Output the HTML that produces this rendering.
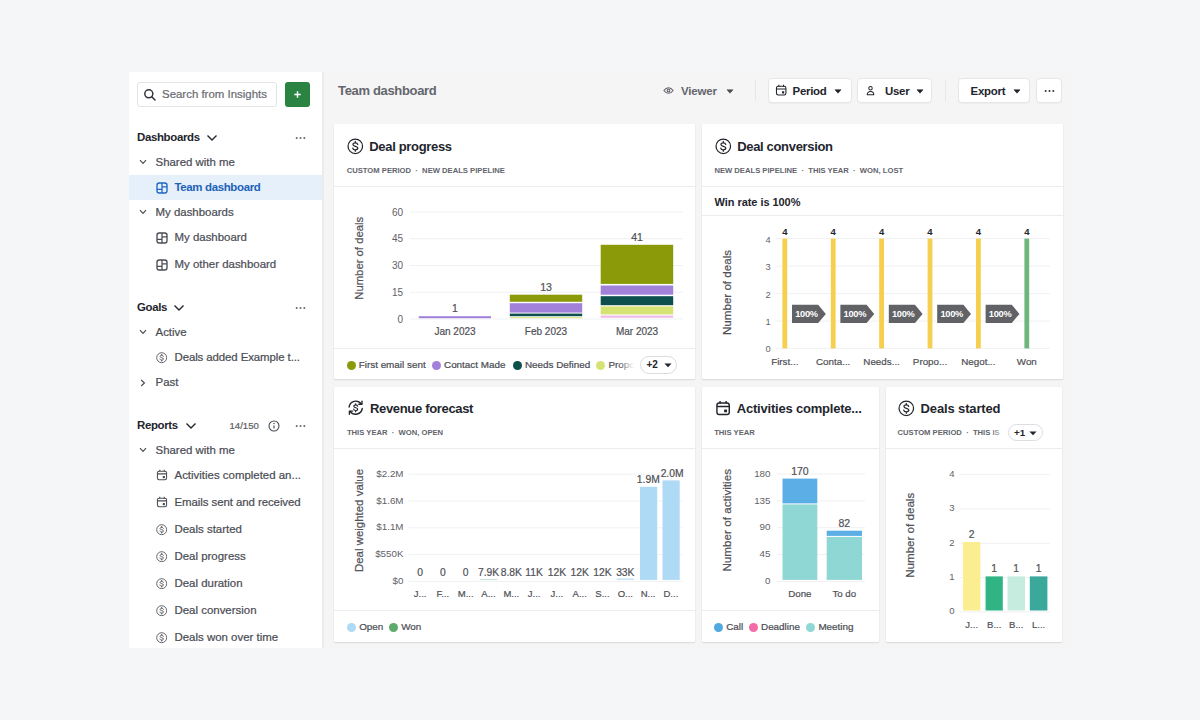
<!DOCTYPE html>
<html>
<head>
<meta charset="utf-8">
<title>Team dashboard</title>
<style>
*{box-sizing:border-box;margin:0;padding:0}
html,body{width:1200px;height:720px;overflow:hidden}
body{background:#f5f6f8;font-family:"Liberation Sans",sans-serif;color:#3f4148;position:relative}
.abs{position:absolute}
.t{position:absolute;white-space:nowrap;line-height:1;transform:translateY(-50%);font-size:11.45px;color:#4b4d54}
.b{font-weight:700;color:#23252d;letter-spacing:-.34px}
.side{position:absolute;left:129px;top:72px;width:193px;height:576px;background:#fff}
.main{position:absolute;left:323.5px;top:72px;width:747.5px;height:576px;background:#f5f5f5}
.card{position:absolute;background:#fff;border-radius:1px;box-shadow:0 1px 1.5px rgba(40,40,45,.13),0 0 1px rgba(40,40,45,.08)}
.hr{position:absolute;height:1px;background:#ececef}
.btn{position:absolute;top:78px;height:25px;background:#fff;border:1px solid #e6e6e8;border-radius:4px;box-shadow:0 1px 1px rgba(40,40,45,.04)}
.ct{position:absolute;white-space:nowrap;line-height:1;transform:translateY(-50%);font-size:13px;font-weight:700;color:#23252d;letter-spacing:-.33px}
.sub{position:absolute;white-space:pre;line-height:1;transform:translateY(calc(-50% + .9px));font-size:7.65px;font-weight:700;color:#62646b}
.lg{position:absolute;white-space:nowrap;line-height:1;transform:translateY(-50%);font-size:9.9px;color:#4b4d54}
.dot{position:absolute;width:9px;height:9px;border-radius:50%}
.pill{position:absolute;background:#fff;border:1px solid #dcdde2;border-radius:10px}
svg{position:absolute;overflow:visible}
svg text{font-family:"Liberation Sans",sans-serif}
.t,.lg{-webkit-text-stroke:.22px currentColor}
.t.b{-webkit-text-stroke:0}
svg text:not([font-weight="700"]){stroke:currentColor;stroke-width:.2px}
</style>
</head>
<body>

<svg width="0" height="0" style="position:absolute"><defs>
<symbol id="dl" viewBox="0 0 16 16"><circle cx="8" cy="8" r="7" fill="none" stroke="currentColor" stroke-width="1.2"/><path d="M10.35 6.25c-.25-1-1.1-1.6-2.35-1.6-1.35 0-2.25.7-2.25 1.7 0 2.35 4.7 1.05 4.7 3.4 0 1-.95 1.7-2.4 1.7-1.35 0-2.3-.6-2.55-1.65M8 3.3v1.4M8 11.4v1.4" fill="none" stroke="currentColor" stroke-width="1.2" stroke-linecap="round"/></symbol>
<symbol id="cal" viewBox="0 0 16 16"><rect x="1.9" y="2.9" width="12.2" height="11.4" rx="2.2" fill="none" stroke="currentColor" stroke-width="1.4"/><path d="M1.9 6.5h12.2M5 1v2.4M11 1v2.4" stroke="currentColor" stroke-width="1.4"/><rect x="9" y="9.3" width="2.9" height="2.9" rx=".5" fill="currentColor"/></symbol>
<symbol id="dash" viewBox="0 0 12 12"><rect x="1" y="1" width="10" height="10" rx="2.2" fill="none" stroke="currentColor" stroke-width="1.35"/><path d="M6 1v10M1 7.4h5M6 4.8h5" stroke="currentColor" stroke-width="1.25" fill="none"/></symbol>
</defs></svg>
<!-- ============ SIDEBAR ============ -->
<div class="side"></div>
<div class="abs" style="left:322px;top:72px;width:1.5px;height:576px;background:#ebebed"></div>
<div class="main"></div>

<!-- search -->
<div class="abs" style="left:137px;top:82px;width:140px;height:25px;border:1px solid #e3e4e7;border-radius:3px;background:#fff"></div>
<svg style="left:143px;top:88px" width="14" height="14" viewBox="0 0 14 14"><circle cx="5.8" cy="5.8" r="4" fill="none" stroke="#33353c" stroke-width="1.5"/><path d="M8.8 8.8L12 12" stroke="#33353c" stroke-width="1.6" stroke-linecap="round"/></svg>
<div class="t" style="left:162px;top:94.5px;color:#6a6c73">Search from Insights</div>
<div class="abs" style="left:285px;top:82px;width:25px;height:25px;border-radius:3px;background:#2a8340"></div>
<svg style="left:285px;top:82px" width="25" height="25" viewBox="0 0 25 25"><path d="M12.5 9.3v6.4M9.3 12.5h6.4" stroke="#fff" stroke-width="1.5"/></svg>

<!-- section: Dashboards -->
<div class="t b" style="left:137px;top:138px">Dashboards</div>
<svg style="left:206px;top:133px" width="12" height="10" viewBox="0 0 12 10"><path d="M1.5 2.5L6 7l4.5-4.5" fill="none" stroke="#23252d" stroke-width="1.4"/></svg>
<svg style="left:295px;top:136px" width="11" height="4" viewBox="0 0 11 4"><circle cx="1.7" cy="2" r="1" fill="#63656c"/><circle cx="5.5" cy="2" r="1" fill="#63656c"/><circle cx="9.3" cy="2" r="1" fill="#63656c"/></svg>

<svg style="left:139px;top:159px" width="8" height="6" viewBox="0 0 8 6"><path d="M1 1.2L4 4.4l3-3.2" fill="none" stroke="#4b4d54" stroke-width="1.2"/></svg>
<div class="t" style="left:155.5px;top:162.5px">Shared with me</div>

<div class="abs" style="left:129px;top:175px;width:193px;height:24.5px;background:#e6f0fb"></div>
<svg style="left:155.5px;top:181.5px;color:#1f66c1" width="12" height="12"><use href="#dash"/></svg>
<div class="t b" style="left:174.5px;top:187.5px;color:#1d62b8">Team dashboard</div>

<svg style="left:139px;top:209px" width="8" height="6" viewBox="0 0 8 6"><path d="M1 1.2L4 4.4l3-3.2" fill="none" stroke="#4b4d54" stroke-width="1.2"/></svg>
<div class="t" style="left:155.5px;top:212.5px">My dashboards</div>

<svg style="left:155.5px;top:231.5px;color:#4b4d54" width="12" height="12"><use href="#dash"/></svg>
<div class="t" style="left:174.5px;top:237.5px">My dashboard</div>

<svg style="left:155.5px;top:258.5px;color:#4b4d54" width="12" height="12"><use href="#dash"/></svg>
<div class="t" style="left:174.5px;top:264.5px">My other dashboard</div>

<!-- section: Goals -->
<div class="t b" style="left:137px;top:308px">Goals</div>
<svg style="left:172.5px;top:303px" width="12" height="10" viewBox="0 0 12 10"><path d="M1.5 2.5L6 7l4.5-4.5" fill="none" stroke="#23252d" stroke-width="1.4"/></svg>
<svg style="left:295px;top:306px" width="11" height="4" viewBox="0 0 11 4"><circle cx="1.7" cy="2" r="1" fill="#63656c"/><circle cx="5.5" cy="2" r="1" fill="#63656c"/><circle cx="9.3" cy="2" r="1" fill="#63656c"/></svg>

<svg style="left:139px;top:329px" width="8" height="6" viewBox="0 0 8 6"><path d="M1 1.2L4 4.4l3-3.2" fill="none" stroke="#4b4d54" stroke-width="1.2"/></svg>
<div class="t" style="left:155.5px;top:332.5px">Active</div>

<svg style="left:156px;top:352.0px;color:#4b4d54" width="11.4" height="11.4"><use href="#dl"/></svg>
<div class="t" style="left:174.5px;top:357.5px;letter-spacing:-.1px">Deals added Example t...</div>

<svg style="left:140px;top:378.5px" width="6" height="8" viewBox="0 0 6 8"><path d="M1.2 1L4.4 4 1.2 7" fill="none" stroke="#4b4d54" stroke-width="1.2"/></svg>
<div class="t" style="left:155.5px;top:382.5px">Past</div>

<!-- section: Reports -->
<div class="t b" style="left:137px;top:425.5px">Reports</div>
<svg style="left:184.5px;top:420.5px" width="12" height="10" viewBox="0 0 12 10"><path d="M1.5 2.5L6 7l4.5-4.5" fill="none" stroke="#23252d" stroke-width="1.4"/></svg>
<div class="t" style="left:229.5px;top:425.5px;font-size:9.6px;color:#5d5f66">14/150</div>
<svg style="left:267.5px;top:419.5px" width="12" height="12" viewBox="0 0 12 12"><circle cx="6" cy="6" r="5" fill="none" stroke="#4b4d54" stroke-width="1.1"/><path d="M6 5.4v3.2" stroke="#4b4d54" stroke-width="1.2"/><circle cx="6" cy="3.6" r=".75" fill="#4b4d54"/></svg>
<svg style="left:295px;top:423.5px" width="11" height="4" viewBox="0 0 11 4"><circle cx="1.7" cy="2" r="1" fill="#63656c"/><circle cx="5.5" cy="2" r="1" fill="#63656c"/><circle cx="9.3" cy="2" r="1" fill="#63656c"/></svg>

<svg style="left:139px;top:447px" width="8" height="6" viewBox="0 0 8 6"><path d="M1 1.2L4 4.4l3-3.2" fill="none" stroke="#4b4d54" stroke-width="1.2"/></svg>
<div class="t" style="left:155.5px;top:450.5px">Shared with me</div>

<svg style="left:155.6px;top:469.1px;color:#4b4d54" width="12" height="12"><use href="#cal"/></svg>
<div class="t" style="left:174.5px;top:475.5px">Activities completed an...</div>

<svg style="left:155.6px;top:496.1px;color:#4b4d54" width="12" height="12"><use href="#cal"/></svg>
<div class="t" style="left:174.5px;top:502.5px;letter-spacing:-.07px">Emails sent and received</div>

<svg style="left:156px;top:524.0px;color:#4b4d54" width="11.4" height="11.4"><use href="#dl"/></svg>
<div class="t" style="left:174.5px;top:529.5px">Deals started</div>

<svg style="left:156px;top:551.0px;color:#4b4d54" width="11.4" height="11.4"><use href="#dl"/></svg>
<div class="t" style="left:174.5px;top:556.5px">Deal progress</div>

<svg style="left:156px;top:578.0px;color:#4b4d54" width="11.4" height="11.4"><use href="#dl"/></svg>
<div class="t" style="left:174.5px;top:583.5px">Deal duration</div>

<svg style="left:156px;top:605.0px;color:#4b4d54" width="11.4" height="11.4"><use href="#dl"/></svg>
<div class="t" style="left:174.5px;top:610.5px">Deal conversion</div>

<svg style="left:156px;top:632.0px;color:#4b4d54" width="11.4" height="11.4"><use href="#dl"/></svg>
<div class="t" style="left:174.5px;top:637.5px">Deals won over time</div>


<!-- ============ TOP BAR ============ -->
<div class="t" style="left:338px;top:89.6px;font-size:13px;font-weight:700;color:#64666d;letter-spacing:-.33px;-webkit-text-stroke:0">Team dashboard</div>

<!-- viewer -->
<svg style="left:662.6px;top:86.2px" width="11" height="9" viewBox="0 0 12 10"><path d="M.9 5C2.5 2.7 4.1 1.9 6 1.9S9.5 2.7 11.1 5C9.5 7.3 7.9 8.1 6 8.1S2.5 7.3 .9 5z" fill="none" stroke="#5d5f66" stroke-width="1.15"/><circle cx="6" cy="5" r="1.5" fill="none" stroke="#5d5f66" stroke-width="1.15"/></svg>
<div class="t" style="left:681px;top:91.5px;font-weight:700;color:#64666d;font-size:11.5px;letter-spacing:-.2px;-webkit-text-stroke:0">Viewer</div>
<svg style="left:726px;top:89px" width="8" height="5" viewBox="0 0 8 5"><path d="M1 .8h6L4 4.2z" fill="#4b4d54" stroke="#4b4d54" stroke-width=".6" stroke-linejoin="round"/></svg>
<div class="abs" style="left:755px;top:80px;width:1px;height:21px;background:#e6e7ea"></div>
<div class="abs" style="left:944.6px;top:80px;width:1px;height:21px;background:#e6e7ea"></div>

<!-- Period -->
<div class="btn" style="left:768px;width:84px"></div>
<svg style="left:775.3px;top:84.2px;color:#23252d" width="12.4" height="12.4"><use href="#cal"/></svg>
<div class="t b" style="left:792.5px;top:91.5px;letter-spacing:-.25px">Period</div>
<svg style="left:834px;top:89px" width="8" height="5" viewBox="0 0 8 5"><path d="M1 .8h6L4 4.2z" fill="#23252d" stroke="#23252d" stroke-width=".6" stroke-linejoin="round"/></svg>

<!-- User -->
<div class="btn" style="left:857.4px;width:75px"></div>
<svg style="left:864.6px;top:85px" width="11" height="11" viewBox="0 0 12 12"><circle cx="6" cy="3.5" r="1.9" fill="none" stroke="#23252d" stroke-width="1.1"/><path d="M2.4 10.6c0-2.2 1.5-3.4 3.6-3.4s3.6 1.2 3.6 3.4z" fill="none" stroke="#23252d" stroke-width="1.1" stroke-linejoin="round"/></svg>
<div class="t b" style="left:885px;top:91.5px;letter-spacing:-.25px">User</div>
<svg style="left:915.5px;top:89px" width="8" height="5" viewBox="0 0 8 5"><path d="M1 .8h6L4 4.2z" fill="#23252d" stroke="#23252d" stroke-width=".6" stroke-linejoin="round"/></svg>

<!-- Export -->
<div class="btn" style="left:957.6px;width:72.6px"></div>
<div class="t b" style="left:970.5px;top:91.5px;letter-spacing:-.25px">Export</div>
<svg style="left:1013px;top:89px" width="8" height="5" viewBox="0 0 8 5"><path d="M1 .8h6L4 4.2z" fill="#23252d" stroke="#23252d" stroke-width=".6" stroke-linejoin="round"/></svg>

<!-- more -->
<div class="btn" style="left:1036.3px;width:25.3px"></div>
<svg style="left:1043.7px;top:88.5px" width="11" height="4" viewBox="0 0 11 4"><circle cx="1.7" cy="2" r="1" fill="#33353c"/><circle cx="5.5" cy="2" r="1" fill="#33353c"/><circle cx="9.3" cy="2" r="1" fill="#33353c"/></svg>


<!-- ============ CARDS ============ -->
<div class="card" style="left:334.3px;top:124.3px;width:360.7px;height:255.2px"></div>
<div class="card" style="left:702px;top:124.3px;width:360.6px;height:255.2px"></div>
<div class="card" style="left:334.3px;top:387.2px;width:360.7px;height:255px"></div>
<div class="card" style="left:702px;top:387.2px;width:177.2px;height:255px"></div>
<div class="card" style="left:885.6px;top:387.2px;width:176.6px;height:255px"></div>

<!-- Deal progress -->
<svg style="left:347.3px;top:137.8px;color:#23252d" width="16.6" height="16.6"><use href="#dl"/></svg>
<div class="ct" style="left:369.3px;top:146px">Deal progress</div>
<div class="sub" style="left:346.7px;top:170px">CUSTOM PERIOD  ·  NEW DEALS PIPELINE</div>
<div class="hr" style="left:334px;top:185.5px;width:361px"></div>
<div class="hr" style="left:334px;top:348.3px;width:361px"></div>

<!-- Deal conversion -->
<svg style="left:715.3px;top:137.8px;color:#23252d" width="16.6" height="16.6"><use href="#dl"/></svg>
<div class="ct" style="left:737.2px;top:146px">Deal conversion</div>
<div class="sub" style="left:714.4px;top:170px">NEW DEALS PIPELINE  ·  THIS YEAR  ·  WON, LOST</div>
<div class="hr" style="left:702px;top:185.5px;width:361px"></div>
<div class="t b" style="left:714.5px;top:201.5px;font-size:11px;letter-spacing:-.05px">Win rate is 100%</div>
<div class="hr" style="left:702px;top:215px;width:361px"></div>

<!-- Revenue forecast -->
<svg style="left:346.6px;top:399.4px" width="17.4" height="17.4" viewBox="0 0 18 18"><g fill="none" stroke="#23252d" stroke-width="1.45" stroke-linecap="round" stroke-linejoin="round"><path d="M2.2 8.3A6.9 6.9 0 0 1 14.7 5.2"/><path d="M15.8 9.7A6.9 6.9 0 0 1 3.3 12.8"/><path d="M15.5 2.2v3.3h-3.3"/><path d="M2.5 15.8v-3.3h3.3"/></g><g transform="translate(2.2 2.2) scale(.85)"><path d="M10.35 6.25c-.25-1-1.1-1.6-2.35-1.6-1.35 0-2.25.7-2.25 1.7 0 2.35 4.7 1.05 4.7 3.4 0 1-.95 1.7-2.4 1.7-1.35 0-2.3-.6-2.55-1.65M8 3.3v1.4M8 11.4v1.4" fill="none" stroke="#23252d" stroke-width="1.45" stroke-linecap="round"/></g></svg>
<div class="ct" style="left:370px;top:408px">Revenue forecast</div>
<div class="sub" style="left:346.9px;top:432px">THIS YEAR  ·  WON, OPEN</div>
<div class="hr" style="left:334px;top:448px;width:361px"></div>
<div class="hr" style="left:334px;top:609.6px;width:361px"></div>

<!-- Activities -->
<svg style="left:715.3px;top:399.6px;color:#23252d" width="16.2" height="16.2"><use href="#cal"/></svg>
<div class="ct" style="left:736.7px;top:408px;letter-spacing:-.2px">Activities complete...</div>
<div class="sub" style="left:714.2px;top:432px">THIS YEAR</div>
<div class="hr" style="left:702px;top:448px;width:177px"></div>
<div class="hr" style="left:702px;top:609.6px;width:177px"></div>

<!-- Deals started -->
<svg style="left:898.3px;top:399.8px;color:#23252d" width="16.6" height="16.6"><use href="#dl"/></svg>
<div class="ct" style="left:920.6px;top:408px;letter-spacing:-.14px">Deals started</div>
<div class="sub" style="left:897.5px;top:432px">CUSTOM PERIOD  ·  THIS IS</div>
<div class="abs" style="left:990px;top:424px;width:18px;height:16px;background:linear-gradient(90deg,rgba(255,255,255,0),#fff)"></div>
<div class="pill" style="left:1007.8px;top:424px;width:35.4px;height:17.4px"></div>
<div class="t b" style="left:1014px;top:432.8px;font-size:9.8px;letter-spacing:0">+1</div>
<svg style="left:1029px;top:430.8px" width="8" height="5" viewBox="0 0 8 5"><path d="M.4 .4h7.2L4 4.3z" fill="#23252d"/></svg>
<div class="hr" style="left:885.5px;top:448px;width:177.5px"></div>


<!-- CHARTS-START -->
<svg style="left:0;top:0" width="1200" height="720" viewBox="0 0 1200 720">
<!-- deal progress -->
<rect x="409.5" y="211.5" width="273.5" height="1" fill="#f0f1f3"/>
<text x="403.0" y="215.6" font-size="10" text-anchor="end" fill="#5f6168" font-weight="400" style="stroke:none">60</text>
<rect x="409.5" y="238.2" width="273.5" height="1" fill="#f0f1f3"/>
<text x="403.0" y="242.3" font-size="10" text-anchor="end" fill="#5f6168" font-weight="400" style="stroke:none">45</text>
<rect x="409.5" y="265.0" width="273.5" height="1" fill="#f0f1f3"/>
<text x="403.0" y="269.1" font-size="10" text-anchor="end" fill="#5f6168" font-weight="400" style="stroke:none">30</text>
<rect x="409.5" y="291.7" width="273.5" height="1" fill="#f0f1f3"/>
<text x="403.0" y="295.8" font-size="10" text-anchor="end" fill="#5f6168" font-weight="400" style="stroke:none">15</text>
<rect x="409.5" y="318.5" width="273.5" height="1" fill="#f0f1f3"/>
<text x="403.0" y="322.6" font-size="10" text-anchor="end" fill="#5f6168" font-weight="400" style="stroke:none">0</text>
<text transform="translate(363.0,258.3) rotate(-90)" font-size="11.3" text-anchor="middle" fill="#55575e">Number of deals</text>
<rect x="418.8" y="316.2" width="72.2" height="2.0" fill="#a181da"/>
<text x="455.0" y="311.8" font-size="10.5" text-anchor="middle" fill="#55575e" font-weight="400">1</text>
<rect x="509.8" y="294.7" width="72.4" height="7.1" fill="#8a9a09"/>
<rect x="509.8" y="303.2" width="72.4" height="9.4" fill="#a181da"/>
<rect x="509.8" y="313.6" width="72.4" height="2.6" fill="#0c4f4c"/>
<rect x="509.8" y="317.2" width="72.4" height="1.0" fill="#d5e375"/>
<text x="546.0" y="291.1" font-size="10.5" text-anchor="middle" fill="#55575e" font-weight="400">13</text>
<rect x="600.7" y="244.8" width="72.5" height="39.1" fill="#8a9a09"/>
<rect x="600.7" y="285.5" width="72.5" height="9.2" fill="#a181da"/>
<rect x="600.7" y="296.2" width="72.5" height="9.0" fill="#0c4f4c"/>
<rect x="600.7" y="306.4" width="72.5" height="8.0" fill="#d5e375"/>
<rect x="600.7" y="315.5" width="72.5" height="2.3" fill="#f2bce8"/>
<text x="637.0" y="240.8" font-size="10.5" text-anchor="middle" fill="#55575e" font-weight="400">41</text>
<text x="455.0" y="335.3" font-size="10" text-anchor="middle" fill="#55575e" font-weight="400">Jan 2023</text>
<text x="546.0" y="335.3" font-size="10" text-anchor="middle" fill="#55575e" font-weight="400">Feb 2023</text>
<text x="637.0" y="335.3" font-size="10" text-anchor="middle" fill="#55575e" font-weight="400">Mar 2023</text>
<!-- deal conversion -->
<rect x="775.5" y="238.1" width="274.5" height="1" fill="#f0f1f3"/>
<text x="768.0" y="242.6" font-size="9.3" text-anchor="middle" fill="#63656c" font-weight="400" style="stroke:none">4</text>
<rect x="775.5" y="265.6" width="274.5" height="1" fill="#f0f1f3"/>
<text x="768.0" y="270.1" font-size="9.3" text-anchor="middle" fill="#63656c" font-weight="400" style="stroke:none">3</text>
<rect x="775.5" y="293.1" width="274.5" height="1" fill="#f0f1f3"/>
<text x="768.0" y="297.6" font-size="9.3" text-anchor="middle" fill="#63656c" font-weight="400" style="stroke:none">2</text>
<rect x="775.5" y="320.6" width="274.5" height="1" fill="#f0f1f3"/>
<text x="768.0" y="325.1" font-size="9.3" text-anchor="middle" fill="#63656c" font-weight="400" style="stroke:none">1</text>
<rect x="775.5" y="347.9" width="274.5" height="1" fill="#f0f1f3"/>
<text x="768.0" y="352.4" font-size="9.3" text-anchor="middle" fill="#63656c" font-weight="400" style="stroke:none">0</text>
<text transform="translate(730.8,292.5) rotate(-90)" font-size="11.6" text-anchor="middle" fill="#55575e">Number of deals</text>
<rect x="782.4" y="238.6" width="4.8" height="109.8" fill="#f6cf4e"/>
<text x="784.8" y="234.9" font-size="9.5" text-anchor="middle" fill="#23252d" font-weight="700">4</text>
<rect x="830.8" y="238.6" width="4.8" height="109.8" fill="#f6cf4e"/>
<text x="833.2" y="234.9" font-size="9.5" text-anchor="middle" fill="#23252d" font-weight="700">4</text>
<rect x="879.2" y="238.6" width="4.8" height="109.8" fill="#f6cf4e"/>
<text x="881.6" y="234.9" font-size="9.5" text-anchor="middle" fill="#23252d" font-weight="700">4</text>
<rect x="927.6" y="238.6" width="4.8" height="109.8" fill="#f6cf4e"/>
<text x="930.0" y="234.9" font-size="9.5" text-anchor="middle" fill="#23252d" font-weight="700">4</text>
<rect x="976.0" y="238.6" width="4.8" height="109.8" fill="#f6cf4e"/>
<text x="978.4" y="234.9" font-size="9.5" text-anchor="middle" fill="#23252d" font-weight="700">4</text>
<rect x="1024.4" y="238.6" width="4.8" height="109.8" fill="#6fb57e"/>
<text x="1026.8" y="234.9" font-size="9.5" text-anchor="middle" fill="#23252d" font-weight="700">4</text>
<path d="M792.0 304.8h26.2l7.6 9.1-7.6 9.1h-26.2z" fill="#606266"/>
<text x="806.5" y="317.3" font-size="9.3" text-anchor="middle" fill="#fff" font-weight="700" letter-spacing="-0.3">100%</text>
<path d="M840.4 304.8h26.2l7.6 9.1-7.6 9.1h-26.2z" fill="#606266"/>
<text x="854.9" y="317.3" font-size="9.3" text-anchor="middle" fill="#fff" font-weight="700" letter-spacing="-0.3">100%</text>
<path d="M888.8 304.8h26.2l7.6 9.1-7.6 9.1h-26.2z" fill="#606266"/>
<text x="903.3" y="317.3" font-size="9.3" text-anchor="middle" fill="#fff" font-weight="700" letter-spacing="-0.3">100%</text>
<path d="M937.2 304.8h26.2l7.6 9.1-7.6 9.1h-26.2z" fill="#606266"/>
<text x="951.7" y="317.3" font-size="9.3" text-anchor="middle" fill="#fff" font-weight="700" letter-spacing="-0.3">100%</text>
<path d="M985.6 304.8h26.2l7.6 9.1-7.6 9.1h-26.2z" fill="#606266"/>
<text x="1000.1" y="317.3" font-size="9.3" text-anchor="middle" fill="#fff" font-weight="700" letter-spacing="-0.3">100%</text>
<text x="784.8" y="364.5" font-size="9.8" text-anchor="middle" fill="#55575e" font-weight="400">First...</text>
<text x="833.2" y="364.5" font-size="9.8" text-anchor="middle" fill="#55575e" font-weight="400">Conta...</text>
<text x="881.6" y="364.5" font-size="9.8" text-anchor="middle" fill="#55575e" font-weight="400">Needs...</text>
<text x="930.0" y="364.5" font-size="9.8" text-anchor="middle" fill="#55575e" font-weight="400">Propo...</text>
<text x="978.4" y="364.5" font-size="9.8" text-anchor="middle" fill="#55575e" font-weight="400">Negot...</text>
<text x="1026.8" y="364.5" font-size="9.8" text-anchor="middle" fill="#55575e" font-weight="400">Won</text>
<!-- revenue -->
<rect x="408.7" y="473.7" width="273.6" height="1" fill="#f0f1f3"/>
<text x="403.5" y="476.7" font-size="9.8" text-anchor="end" fill="#5f6168" font-weight="400" style="stroke:none">$2.2M</text>
<rect x="408.7" y="500.5" width="273.6" height="1" fill="#f0f1f3"/>
<text x="403.5" y="503.5" font-size="9.8" text-anchor="end" fill="#5f6168" font-weight="400" style="stroke:none">$1.6M</text>
<rect x="408.7" y="527.3" width="273.6" height="1" fill="#f0f1f3"/>
<text x="403.5" y="530.3" font-size="9.8" text-anchor="end" fill="#5f6168" font-weight="400" style="stroke:none">$1.1M</text>
<rect x="408.7" y="554.1" width="273.6" height="1" fill="#f0f1f3"/>
<text x="403.5" y="557.1" font-size="9.8" text-anchor="end" fill="#5f6168" font-weight="400" style="stroke:none">$550K</text>
<rect x="408.7" y="580.9" width="273.6" height="1" fill="#f0f1f3"/>
<text x="403.5" y="583.9" font-size="9.8" text-anchor="end" fill="#5f6168" font-weight="400" style="stroke:none">$0</text>
<text transform="translate(363.0,520.5) rotate(-90)" font-size="11.45" text-anchor="middle" fill="#55575e">Deal weighted value</text>
<rect x="640.0" y="486.8" width="17.2" height="93.1" fill="#aedaf6"/>
<rect x="662.5" y="480.4" width="17.2" height="99.5" fill="#aedaf6"/>
<rect x="616.7" y="578.5" width="17.2" height="1.4" fill="#bfe2f8"/>
<rect x="479.9" y="579.2" width="17.2" height="0.7" fill="#a9d6c0"/>
<text x="420.1" y="576.0" font-size="10.3" text-anchor="middle" fill="#55575e" font-weight="400">0</text>
<text x="442.9" y="576.0" font-size="10.3" text-anchor="middle" fill="#55575e" font-weight="400">0</text>
<text x="465.7" y="576.0" font-size="10.3" text-anchor="middle" fill="#55575e" font-weight="400">0</text>
<text x="488.5" y="576.0" font-size="10.3" text-anchor="middle" fill="#55575e" font-weight="400">7.9K</text>
<text x="511.3" y="576.0" font-size="10.3" text-anchor="middle" fill="#55575e" font-weight="400">8.8K</text>
<text x="534.1" y="576.0" font-size="10.3" text-anchor="middle" fill="#55575e" font-weight="400">11K</text>
<text x="556.9" y="576.0" font-size="10.3" text-anchor="middle" fill="#55575e" font-weight="400">12K</text>
<text x="579.7" y="576.0" font-size="10.3" text-anchor="middle" fill="#55575e" font-weight="400">12K</text>
<text x="602.5" y="576.0" font-size="10.3" text-anchor="middle" fill="#55575e" font-weight="400">12K</text>
<text x="625.3" y="576.0" font-size="10.3" text-anchor="middle" fill="#55575e" font-weight="400">33K</text>
<text x="648.3" y="483.0" font-size="10.3" text-anchor="middle" fill="#55575e" font-weight="400">1.9M</text>
<text x="672.1" y="477.1" font-size="10.3" text-anchor="middle" fill="#55575e" font-weight="400">2.0M</text>
<text x="420.1" y="597.0" font-size="9.5" text-anchor="middle" fill="#55575e" font-weight="400">J...</text>
<text x="442.9" y="597.0" font-size="9.5" text-anchor="middle" fill="#55575e" font-weight="400">F...</text>
<text x="465.7" y="597.0" font-size="9.5" text-anchor="middle" fill="#55575e" font-weight="400">M...</text>
<text x="488.5" y="597.0" font-size="9.5" text-anchor="middle" fill="#55575e" font-weight="400">A...</text>
<text x="511.3" y="597.0" font-size="9.5" text-anchor="middle" fill="#55575e" font-weight="400">M...</text>
<text x="534.1" y="597.0" font-size="9.5" text-anchor="middle" fill="#55575e" font-weight="400">J...</text>
<text x="556.9" y="597.0" font-size="9.5" text-anchor="middle" fill="#55575e" font-weight="400">J...</text>
<text x="579.7" y="597.0" font-size="9.5" text-anchor="middle" fill="#55575e" font-weight="400">A...</text>
<text x="602.5" y="597.0" font-size="9.5" text-anchor="middle" fill="#55575e" font-weight="400">S...</text>
<text x="625.3" y="597.0" font-size="9.5" text-anchor="middle" fill="#55575e" font-weight="400">O...</text>
<text x="648.1" y="597.0" font-size="9.5" text-anchor="middle" fill="#55575e" font-weight="400">N...</text>
<text x="670.9" y="597.0" font-size="9.5" text-anchor="middle" fill="#55575e" font-weight="400">D...</text>
<!-- activities -->
<rect x="776.8" y="473.6" width="88.2" height="1" fill="#f0f1f3"/>
<text x="770.5" y="476.7" font-size="9.8" text-anchor="end" fill="#5f6168" font-weight="400" style="stroke:none">180</text>
<rect x="776.8" y="500.4" width="88.2" height="1" fill="#f0f1f3"/>
<text x="770.5" y="503.5" font-size="9.8" text-anchor="end" fill="#5f6168" font-weight="400" style="stroke:none">135</text>
<rect x="776.8" y="527.2" width="88.2" height="1" fill="#f0f1f3"/>
<text x="770.5" y="530.3" font-size="9.8" text-anchor="end" fill="#5f6168" font-weight="400" style="stroke:none">90</text>
<rect x="776.8" y="554.0" width="88.2" height="1" fill="#f0f1f3"/>
<text x="770.5" y="557.1" font-size="9.8" text-anchor="end" fill="#5f6168" font-weight="400" style="stroke:none">45</text>
<rect x="776.8" y="580.8" width="88.2" height="1" fill="#f0f1f3"/>
<text x="770.5" y="583.9" font-size="9.8" text-anchor="end" fill="#5f6168" font-weight="400" style="stroke:none">0</text>
<text transform="translate(730.7,520.3) rotate(-90)" font-size="11.7" text-anchor="middle" fill="#55575e">Number of activities</text>
<rect x="782.5" y="478.6" width="34.8" height="24.8" fill="#5baee6"/>
<rect x="782.5" y="504.4" width="34.8" height="75.5" fill="#8fd7d4"/>
<rect x="826.7" y="530.7" width="35.3" height="5.2" fill="#5baee6"/>
<rect x="826.7" y="536.9" width="35.3" height="43.0" fill="#8fd7d4"/>
<text x="799.9" y="474.8" font-size="10.5" text-anchor="middle" fill="#55575e" font-weight="400">170</text>
<text x="844.3" y="527.3" font-size="10.5" text-anchor="middle" fill="#55575e" font-weight="400">82</text>
<text x="799.9" y="597.1" font-size="9.7" text-anchor="middle" fill="#55575e" font-weight="400">Done</text>
<text x="844.3" y="597.1" font-size="9.7" text-anchor="middle" fill="#55575e" font-weight="400">To do</text>
<!-- deals started -->
<rect x="959.4" y="474.1" width="91.0" height="1" fill="#f0f1f3"/>
<text x="951.9" y="477.1" font-size="9.5" text-anchor="middle" fill="#5f6168" font-weight="400" style="stroke:none">4</text>
<rect x="959.4" y="508.4" width="91.0" height="1" fill="#f0f1f3"/>
<text x="951.9" y="511.4" font-size="9.5" text-anchor="middle" fill="#5f6168" font-weight="400" style="stroke:none">3</text>
<rect x="959.4" y="542.8" width="91.0" height="1" fill="#f0f1f3"/>
<text x="951.9" y="545.8" font-size="9.5" text-anchor="middle" fill="#5f6168" font-weight="400" style="stroke:none">2</text>
<rect x="959.4" y="577.1" width="91.0" height="1" fill="#f0f1f3"/>
<text x="951.9" y="580.1" font-size="9.5" text-anchor="middle" fill="#5f6168" font-weight="400" style="stroke:none">1</text>
<rect x="959.4" y="611.4" width="91.0" height="1" fill="#f0f1f3"/>
<text x="951.9" y="614.4" font-size="9.5" text-anchor="middle" fill="#5f6168" font-weight="400" style="stroke:none">0</text>
<text transform="translate(913.7,535.3) rotate(-90)" font-size="11.6" text-anchor="middle" fill="#55575e">Number of deals</text>
<rect x="963.1" y="542.0" width="17.3" height="68.5" fill="#fbee90"/>
<rect x="985.6" y="576.4" width="17.2" height="34.1" fill="#30b484"/>
<rect x="1007.5" y="576.4" width="17.5" height="34.1" fill="#c6ecdf"/>
<rect x="1029.8" y="576.4" width="17.6" height="34.1" fill="#3ba89c"/>
<text x="971.7" y="538.1" font-size="10.3" text-anchor="middle" fill="#55575e" font-weight="400">2</text>
<text x="994.2" y="572.2" font-size="10.3" text-anchor="middle" fill="#55575e" font-weight="400">1</text>
<text x="1016.2" y="572.2" font-size="10.3" text-anchor="middle" fill="#55575e" font-weight="400">1</text>
<text x="1038.6" y="572.2" font-size="10.3" text-anchor="middle" fill="#55575e" font-weight="400">1</text>
<text x="971.7" y="627.8" font-size="9.5" text-anchor="middle" fill="#55575e" font-weight="400">J...</text>
<text x="994.2" y="627.8" font-size="9.5" text-anchor="middle" fill="#55575e" font-weight="400">B...</text>
<text x="1016.2" y="627.8" font-size="9.5" text-anchor="middle" fill="#55575e" font-weight="400">B...</text>
<text x="1038.6" y="627.8" font-size="9.5" text-anchor="middle" fill="#55575e" font-weight="400">L...</text>
</svg>
<!-- legends -->
<div class="dot" style="left:346.5px;top:360.5px;background:#8a9a09"></div>
<div class="lg" style="left:358.7px;top:365.0px">First email sent</div>
<div class="dot" style="left:432.2px;top:360.5px;background:#a181da"></div>
<div class="lg" style="left:444.0px;top:365.0px">Contact Made</div>
<div class="dot" style="left:512.7px;top:360.5px;background:#0c4f4c"></div>
<div class="lg" style="left:524.9px;top:365.0px">Needs Defined</div>
<div class="dot" style="left:596.2px;top:360.5px;background:#d5e375"></div>
<div class="lg" style="left:608.4px;top:365.0px">Proposal Made</div>
<div class="abs" style="left:618px;top:356px;width:16px;height:18px;background:linear-gradient(90deg,rgba(255,255,255,0),#fff)"></div>
<div class="abs" style="left:634px;top:356px;width:56px;height:18px;background:#fff"></div>
<div class="pill" style="left:640px;top:355.8px;width:37.3px;height:18.5px"></div>
<div class="t b" style="left:646.5px;top:364.8px;font-size:10px;letter-spacing:0">+2</div>
<svg style="left:663.8px;top:363.2px" width="8" height="5" viewBox="0 0 8 5"><path d="M.4 .4h7.2L4 4.3z" fill="#23252d"/></svg>
<div class="dot" style="left:346.9px;top:622.5px;background:#aedaf6"></div>
<div class="lg" style="left:359.2px;top:627.0px">Open</div>
<div class="dot" style="left:389.2px;top:622.5px;background:#5fab6c"></div>
<div class="lg" style="left:401.2px;top:627.0px">Won</div>
<div class="dot" style="left:714.2px;top:622.5px;background:#52a9e2"></div>
<div class="lg" style="left:726.2px;top:627.0px">Call</div>
<div class="dot" style="left:749.1px;top:622.5px;background:#f16da6"></div>
<div class="lg" style="left:761.0px;top:627.0px">Deadline</div>
<div class="dot" style="left:806.1px;top:622.5px;background:#8fd7d4"></div>
<div class="lg" style="left:818.4px;top:627.0px">Meeting</div>
<!-- CHARTS-END -->

</body>
</html>
